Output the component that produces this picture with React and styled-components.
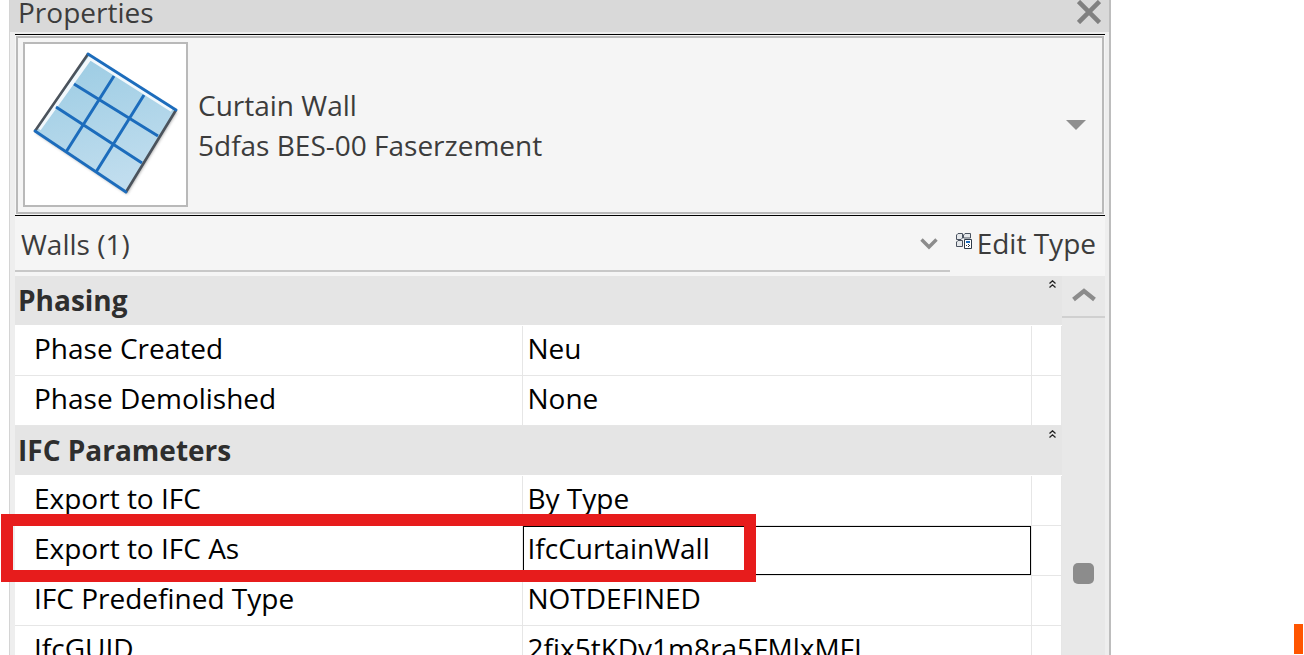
import {useState} from 'react'
import styled, {createGlobalStyle} from 'styled-components'

const groups = [
  {
    name: 'Phasing',
    rows: [
      {id: 'created', name: 'Phase Created', value: 'Neu'},
      {id: 'demolished', name: 'Phase Demolished', value: 'None'},
    ],
  },
  {
    name: 'IFC Parameters',
    rows: [
      {id: 'export', name: 'Export to IFC', value: 'By Type'},
      {id: 'exportAs', name: 'Export to IFC As', value: 'IfcCurtainWall', marked: true},
      {id: 'predefined', name: 'IFC Predefined Type', value: 'NOTDEFINED'},
      {id: 'guid', name: 'IfcGUID', value: '2fix5tKDv1m8ra5FMlxMFL'},
    ],
  },
]

function WallIcon(){
  return(
    <svg width="160" height="160" viewBox="25 44 160 160" aria-hidden="true">
      <defs>
        <linearGradient id="glass" x1="0" y1="0" x2="0.3" y2="1">
          <stop offset="0" stopColor="#98cae2"/>
          <stop offset="1" stopColor="#c0ddee"/>
        </linearGradient>
        <filter id="soft" x="-10%" y="-10%" width="120%" height="120%">
          <feGaussianBlur stdDeviation="1.8"/>
        </filter>
        <filter id="edge" x="-10%" y="-10%" width="120%" height="120%">
          <feGaussianBlur stdDeviation="0.5"/>
        </filter>
      </defs>
      <path d="M89 56L177 112L127 194L36 133Z" fill="#7a7a7a" opacity="0.7" filter="url(#soft)"/>
      <g filter="url(#edge)">
        <path d="M88 54L176 110L126 192L35 131Z" fill="url(#glass)"/>
        <path d="M39 129L90 58L172 110" fill="none" stroke="#f2f8fc" strokeWidth="4"/>
        <path d="M114 76L66 152M144 95L96 172M74 84L158 136M56 107L142 163" stroke="#1c6cbc" strokeWidth="3"/>
        <path d="M88 54L35 131M176 110L126 192" stroke="#4c535c" strokeWidth="2.6" strokeLinecap="round"/>
        <path d="M88 54L176 110M35 131L126 192" stroke="#1c6cbc" strokeWidth="2.8" strokeLinecap="round"/>
      </g>
    </svg>
  )
}

function EditIcon(){
  return(
    <svg width="17" height="17" viewBox="0 0 17 17" aria-hidden="true">
      <path d="M3 1.5H7.5V6L6 7.5H1.5V3ZM10 1.5H15.5V6H8.5V3ZM3 8.5H7.5V14.5H1.5V10Z" fill="#e4e7ea" stroke="#4a5360"/>
      <path d="M9.5 7.5H16.5V16.5H9.5Z" fill="#fff" stroke="#2f3a48"/>
      <path d="M11 9H15V11H11Z" fill="#1c6cbc"/>
      <path d="M11 13H12V14H11ZM13 12H14V13H13ZM14 13H15V14H14ZM13 14H14V15H13Z" fill="#2f3a48"/>
    </svg>
  )
}

function App(){
  const [values, setValues] = useState({exportAs: 'IfcCurtainWall'});
  const [closed, setClosed] = useState({});

  return(
    <Page>
      <GlobalStyle/>
      <Panel>
        <TitleBar>
          <h1>Properties</h1>
          <CloseButton aria-label="Close">
            <svg width="24" height="24" viewBox="0 0 24 24"><path d="M1.5 1.5L22.5 22.5M22.5 1.5L1.5 22.5" stroke="#808080" strokeWidth="4.6"/></svg>
          </CloseButton>
        </TitleBar>
        <Body>
          <TypeFrame>
            <TypeSelector>
              <Thumb><WallIcon/></Thumb>
              <TypeName>
                <span>Curtain Wall</span>
                <span>5dfas BES-00 Faserzement</span>
              </TypeName>
              <svg width="20" height="10" viewBox="0 0 20 10"><path d="M0 0H20L10 10Z" fill="#8f8f8f"/></svg>
            </TypeSelector>
          </TypeFrame>
          <FilterBar>
            <Filter>
              <select aria-label="Category filter">
                <option>Walls (1)</option>
              </select>
              <svg width="18" height="12" viewBox="0 0 18 12"><path d="M1.5 1.5L9 9L16.5 1.5" fill="none" stroke="#8c8c8c" strokeWidth="3.4"/></svg>
            </Filter>
            <EditButton><EditIcon/>Edit Type</EditButton>
          </FilterBar>
          <Grid>
            <TableWrap>
              <Table>
                <colgroup>
                  <col/>
                  <col/>
                  <col className="extra"/>
                </colgroup>
                {groups.map((group)=>(
                  <tbody key={group.name}>
                    <tr>
                      <GroupHead colSpan={3} scope="rowgroup">
                        <div>
                          {group.name}
                          <Collapse
                            aria-label={`Collapse ${group.name}`}
                            onClick={()=>setClosed({...closed, [group.name]: !closed[group.name]})}>
                            <svg width="7" height="8" viewBox="0 0 7 8"><path d="M0.5 3.5L3.5 0.8L6.5 3.5M0.5 7.5L3.5 4.8L6.5 7.5" fill="none" stroke="#222" strokeWidth="1.3"/></svg>
                          </Collapse>
                        </div>
                      </GroupHead>
                    </tr>
                    {!closed[group.name] && group.rows.map((row)=>(
                      <tr key={row.id}>
                        <NameCell>
                          {row.marked ? <label htmlFor={row.id}>{row.name}</label> : row.name}
                          {row.marked && <Marker/>}
                        </NameCell>
                        <ValueCell $editing={row.marked}>
                          {row.marked ?
                            <input
                              id={row.id}
                              value={values[row.id]}
                              onChange={(e)=>setValues({...values, [row.id]: e.target.value})}/>
                            : row.value}
                        </ValueCell>
                        <Cell/>
                      </tr>
                    ))}
                  </tbody>
                ))}
              </Table>
            </TableWrap>
            <ScrollBar>
              <ScrollUp aria-label="Scroll up">
                <svg width="24" height="15" viewBox="0 0 24 15"><path d="M1.5 12.5L12 4L22.5 12.5" fill="none" stroke="#8c8c8c" strokeWidth="4.4"/></svg>
              </ScrollUp>
              <ScrollThumb/>
            </ScrollBar>
          </Grid>
        </Body>
      </Panel>
      <Side><Accent/></Side>
    </Page>
  )
}

const GlobalStyle = createGlobalStyle`
  *{
    box-sizing: border-box;
  }
  body{
    margin: 0;
    background: #fff;
    font-family: 'Open Sans', 'Noto Sans', sans-serif;
    font-size: 28px;
    color: #3c3c3c;
  }
  button, select, input{
    font: inherit;
    color: inherit;
    background: none;
    border: 0;
    padding: 0;
    margin: 0;
  }
  svg{
    display: block;
    flex: none;
  }
`
const Page = styled.div`
  display: flex;
  height: 100vh;
  padding-left: 9px;
  overflow: hidden;
`
const Panel = styled.section`
  flex: 1;
  min-width: 0;
  display: flex;
  flex-direction: column;
  background: #eee;
  border-left: 1px solid #d4d4d4;
  border-right: 2px solid #bdbdbd;
`
const TitleBar = styled.header`
  display: flex;
  justify-content: space-between;
  align-items: center;
  height: 32px;
  padding: 0 8px 8px;
  background: #d9d9d9;
  h1{
    margin: 0;
    font-size: 28px;
    font-weight: 400;
    line-height: 26px;
  }
`
const CloseButton = styled.button`
  width: 24px;
  height: 24px;
`
const Body = styled.div`
  flex: 1;
  min-height: 0;
  display: flex;
  flex-direction: column;
  margin: 2px 4px 0 5px;
  background: #f5f5f5;
`
const TypeFrame = styled.div`
  padding: 1px;
  border-top: 1px solid #000;
  border-bottom: 1px solid #000;
`
const TypeSelector = styled.button`
  display: flex;
  align-items: center;
  gap: 10px;
  width: 100%;
  padding: 4px 16px 5px 5px;
  border: 2px solid #b9b9b9;
  text-align: left;
`
const Thumb = styled.span`
  width: 165px;
  height: 165px;
  border: 2px solid #b9b9b9;
  background: #fff;
  overflow: hidden;
`
const TypeName = styled.span`
  flex: 1;
  display: flex;
  flex-direction: column;
  line-height: 40px;
`
const FilterBar = styled.div`
  display: flex;
  height: 60px;
  padding-bottom: 4px;
`
const Filter = styled.div`
  flex: 1;
  display: flex;
  align-items: center;
  border-bottom: 2px solid #c8c8c8;
  padding: 2px 12px 0 6px;
  select{
    flex: 1;
    appearance: none;
  }
`
const EditButton = styled.button`
  display: flex;
  align-items: center;
  gap: 5px;
  padding: 0 9px 2px 5px;
  svg{
    margin-bottom: 6px;
  }
`
const Grid = styled.div`
  flex: 1;
  min-height: 0;
  display: flex;
  align-items: flex-start;
`
const TableWrap = styled.div`
  flex: 1;
  min-width: 0;
`
const Table = styled.table`
  width: 100%;
  table-layout: fixed;
  border-collapse: separate;
  border-spacing: 0;
  background: #fff;
  color: #000;
  .extra{
    width: 30px;
  }
`
const GroupHead = styled.th`
  height: 50px;
  padding: 0 6px 0 3px;
  border-bottom: 1px solid #fff;
  background: #e5e5e5;
  color: #2e2e2e;
  font-weight: 700;
  text-align: left;
  div{
    display: flex;
    justify-content: space-between;
    line-height: 49px;
  }
`
const Collapse = styled.button`
  display: flex;
  align-items: flex-start;
  padding-top: 4px;
`
const Cell = styled.td`
  height: 50px;
  padding: 0 0 6px;
  border-right: 1px solid #e6e6e6;
  border-bottom: 1px solid #e6e6e6;
  line-height: 40px;
  white-space: nowrap;
`
const NameCell = styled(Cell)`
  position: relative;
  padding-left: 19px;
`
const ValueCell = styled(Cell)`
  padding: ${({$editing}) => $editing ? '0' : '0 0 6px 4px'};
  input{
    display: block;
    width: 100%;
    height: 49px;
    padding: 0 0 6px 3px;
    border: 1px solid #000;
    outline: none;
  }
`
const Marker = styled.span`
  position: absolute;
  z-index: 1;
  top: -12px;
  bottom: -7px;
  left: -14px;
  right: -234px;
  border: 12px solid #e71c1c;
  pointer-events: none;
`
const ScrollBar = styled.div`
  align-self: stretch;
  width: 43px;
  background: #e8e8e8;
`
const ScrollUp = styled.button`
  display: flex;
  justify-content: center;
  width: 100%;
  height: 42px;
  padding-top: 11px;
  border-bottom: 2px solid #d0d0d0;
`
const ScrollThumb = styled.div`
  width: 21px;
  height: 21px;
  margin: 245px auto 0;
  border-radius: 5px;
  background: #8c8c8c;
`
const Side = styled.aside`
  display: flex;
  flex-direction: column;
  justify-content: flex-end;
  align-items: flex-end;
  width: 193px;
  padding: 1px;
`
const Accent = styled.div`
  width: 9px;
  height: 30px;
  background: #ff5500;
`

export default App
